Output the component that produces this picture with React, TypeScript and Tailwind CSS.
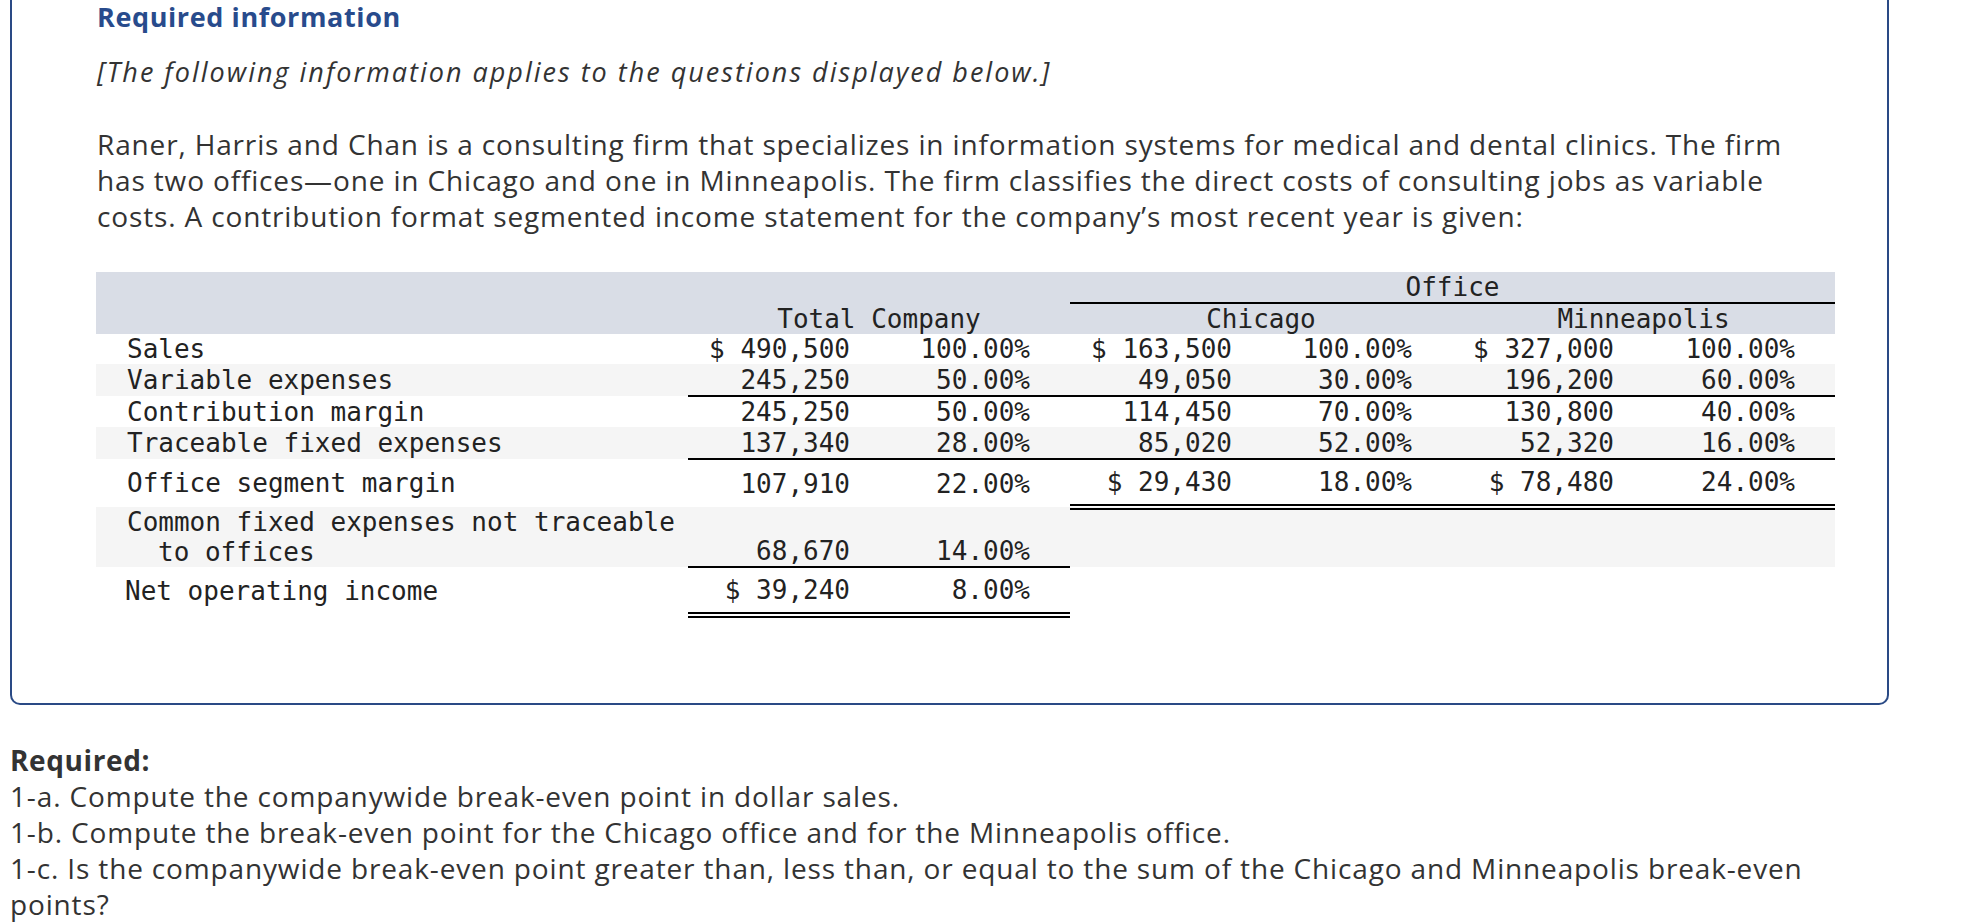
const rows = [
  { label: "Sales", cells: ["$ 490,500", "100.00%", "$ 163,500", "100.00%", "$ 327,000", "100.00%"], bg: false, h: "h-[30px]" },
  { label: "Variable expenses", cells: ["245,250", "50.00%", "49,050", "30.00%", "196,200", "60.00%"], bg: true, h: "h-[32px]", under: "all" },
  { label: "Contribution margin", cells: ["245,250", "50.00%", "114,450", "70.00%", "130,800", "40.00%"], bg: false, h: "h-[30px]" },
  { label: "Traceable fixed expenses", cells: ["137,340", "28.00%", "85,020", "52.00%", "52,320", "16.00%"], bg: true, h: "h-[32px]", under: "all" },
  { label: "Office segment margin", cells: ["107,910", "22.00%", "$ 29,430", "18.00%", "$ 78,480", "24.00%"], bg: false, h: "h-[48px]", under: "offices" },
];

const numCell = "pr-[40px] text-right whitespace-pre";

export default function App() {
  return (
    <div className="min-h-[922px] bg-white text-[#333] font-['Open_Sans',sans-serif]">
      <div className="ml-[10px] w-[1879px] rounded-b-[10px] border-x-2 border-b-2 border-[#2a4a85] pl-[85px] pb-[85px]">
        <h2 className="text-[27px] leading-[34px] font-bold text-[#284b8c] tracking-[0.6px]">Required information</h2>
        <p className="mt-[20px] text-[27px] leading-[36px] italic tracking-[2px]">
          [The following information applies to the questions displayed below.]
        </p>
        <p className="mt-[36px] w-[1716px] text-[28px] leading-[36px] tracking-[0.85px]">
          Raner, Harris and Chan is a consulting firm that specializes in information systems for medical and dental
          clinics. The firm has two offices—one in Chicago and one in Minneapolis. The firm classifies the direct costs
          of consulting jobs as variable costs. A contribution format segmented income statement for the company’s most
          recent year is given:
        </p>

        <table className="mt-[38px] -ml-px table-fixed border-collapse font-['DejaVu_Sans_Mono',monospace] text-[26px] leading-[30px] text-[#222]">
          <colgroup>
            <col className="w-[592px]" />
            <col className="w-[202px]" />
            <col className="w-[180px]" />
            <col className="w-[202px]" />
            <col className="w-[180px]" />
            <col className="w-[202px]" />
            <col className="w-[181px]" />
          </colgroup>
          <thead>
            <tr className="h-[31px] bg-[#d9dde6]">
              <th colSpan={3} />
              <th colSpan={4} className="border-b-2 border-black text-center font-normal">Office</th>
            </tr>
            <tr className="h-[31px] bg-[#d9dde6]">
              <th />
              <th colSpan={2} className="text-center font-normal">Total Company</th>
              <th colSpan={2} className="text-center font-normal">Chicago</th>
              <th colSpan={2} className="text-center font-normal">Minneapolis</th>
            </tr>
          </thead>
          <tbody>
            {rows.map((r) => (
              <tr key={r.label} className={`${r.h} ${r.bg ? "bg-[#f5f5f5]" : ""}`}>
                <td className="pl-[31px] whitespace-pre">{r.label}</td>
                {r.cells.map((c, i) => {
                  let border = "";
                  if (r.under === "all") border = "border-b-2 border-black";
                  if (r.under === "offices" && i >= 2) border = "border-b-[6px] border-double border-black";
                  return (
                    <td key={i} className={`${numCell} ${border}`}>
                      {c}
                    </td>
                  );
                })}
              </tr>
            ))}
            <tr className="h-[60px] bg-[#f5f5f5]">
              <td className="pl-[62px] -indent-[31px] align-top">Common fixed expenses not traceable to offices</td>
              <td className={`${numCell} align-bottom border-b-2 border-black`}>68,670</td>
              <td className={`${numCell} align-bottom border-b-2 border-black`}>14.00%</td>
              <td colSpan={4} />
            </tr>
            <tr className="h-[48px]">
              <td className="pl-[29px]">Net operating income</td>
              <td className={`${numCell} border-b-[6px] border-double border-black`}>$ 39,240</td>
              <td className={`${numCell} border-b-[6px] border-double border-black`}>8.00%</td>
              <td colSpan={4} />
            </tr>
          </tbody>
        </table>
      </div>

      <div className="mt-[37px] ml-[10px] w-[1850px] text-[28px] leading-[36px] tracking-[0.85px]">
        <p className="font-bold tracking-[0.6px]">Required:</p>
        <p>1-a. Compute the companywide break-even point in dollar sales.</p>
        <p>1-b. Compute the break-even point for the Chicago office and for the Minneapolis office.</p>
        <p>
          1-c. Is the companywide break-even point greater than, less than, or equal to the sum of the Chicago and
          Minneapolis break-even points?
        </p>
      </div>
    </div>
  );
}
